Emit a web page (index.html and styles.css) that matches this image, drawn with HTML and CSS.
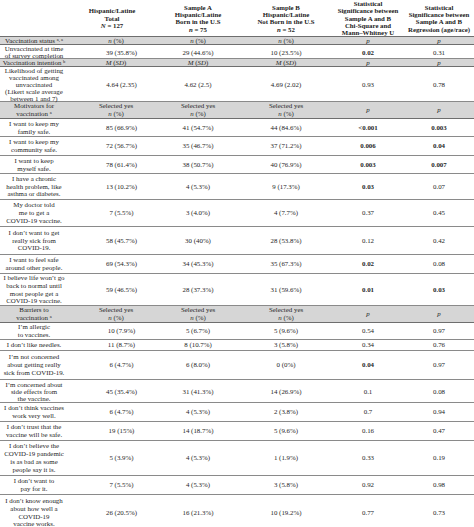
FILE: index.html
```html
<!DOCTYPE html>
<html lang="en">
<head>
<meta charset="utf-8">
<title>Vaccination table</title>
<link rel="stylesheet" href="styles.css">
</head>
<body>
<div class="page">
  <div class="row head h37">
    <div class="c"><div class="t"></div></div>
    <div class="c"><div class="t">Hispanic/Latine<br>Total<br><i>N</i> = 127</div></div>
    <div class="c"><div class="t">Sample A<br>Hispanic/Latine<br>Born in the U.S<br><i>n</i> = 75</div></div>
    <div class="c"><div class="t">Sample B<br>Hispanic/Latine<br>Not Born in the U.S<br><i>n</i> = 52</div></div>
    <div class="c"><div class="t">Statistical<br>Significance between<br>Sample A and B<br>Chi-Square and<br>Mann–Whitney U</div></div>
    <div class="c"><div class="t">Statistical<br>Significance between<br>Sample A and B<br>Regression (age/race)</div></div>
  </div>

  <div class="row sec h8">
    <div class="c"><div class="t">Vaccination status <sup>a, a</sup></div></div>
    <div class="c"><div class="t"><i>n</i> (%)</div></div>
    <div class="c"><div class="t"><i>n</i> (%)</div></div>
    <div class="c"><div class="t"><i>n</i> (%)</div></div>
    <div class="c"><div class="t"><i>p</i></div></div>
    <div class="c"><div class="t"><i>p</i></div></div>
  </div>
  <div class="row dat h14 tight">
    <div class="c"><div class="t">Unvaccinated at time<br>of survey completion</div></div>
    <div class="c"><div class="t">39 (35.8%)</div></div>
    <div class="c"><div class="t">29 (44.6%)</div></div>
    <div class="c"><div class="t">10 (23.5%)</div></div>
    <div class="c"><div class="t"><b>0.02</b></div></div>
    <div class="c"><div class="t">0.31</div></div>
  </div>

  <div class="row sec h8">
    <div class="c"><div class="t">Vaccination intention <sup>b</sup></div></div>
    <div class="c"><div class="t"><i>M</i> (<i>SD</i>)</div></div>
    <div class="c"><div class="t"><i>M</i> (<i>SD</i>)</div></div>
    <div class="c"><div class="t"><i>M</i> (<i>SD</i>)</div></div>
    <div class="c"><div class="t"><i>p</i></div></div>
    <div class="c"><div class="t"><i>p</i></div></div>
  </div>
  <div class="row dat h35 tight">
    <div class="c"><div class="t">Likelihood of getting<br>vaccinated among<br>unvaccinated<br>(Likert scale average<br>between 1 and 7)</div></div>
    <div class="c"><div class="t">4.64 (2.35)</div></div>
    <div class="c"><div class="t">4.62 (2.5)</div></div>
    <div class="c"><div class="t">4.69 (2.02)</div></div>
    <div class="c"><div class="t">0.93</div></div>
    <div class="c"><div class="t">0.78</div></div>
  </div>

  <div class="row sec h17">
    <div class="c"><div class="t">Motivators for<br>vaccination <sup>a</sup></div></div>
    <div class="c"><div class="t">Selected yes<br><i>n</i> (%)</div></div>
    <div class="c"><div class="t">Selected yes<br><i>n</i> (%)</div></div>
    <div class="c"><div class="t">Selected yes<br><i>n</i> (%)</div></div>
    <div class="c"><div class="t"><i>p</i></div></div>
    <div class="c"><div class="t"><i>p</i></div></div>
  </div>
  <div class="row dat h18">
    <div class="c"><div class="t">I want to keep my<br>family safe.</div></div>
    <div class="c"><div class="t">85 (66.9%)</div></div>
    <div class="c"><div class="t">41 (54.7%)</div></div>
    <div class="c"><div class="t">44 (84.6%)</div></div>
    <div class="c"><div class="t"><b>&lt;0.001</b></div></div>
    <div class="c"><div class="t"><b>0.003</b></div></div>
  </div>
  <div class="row dat h19">
    <div class="c"><div class="t">I want to keep my<br>community safe.</div></div>
    <div class="c"><div class="t">72 (56.7%)</div></div>
    <div class="c"><div class="t">35 (46.7%)</div></div>
    <div class="c"><div class="t">37 (71.2%)</div></div>
    <div class="c"><div class="t"><b>0.006</b></div></div>
    <div class="c"><div class="t"><b>0.04</b></div></div>
  </div>
  <div class="row dat h18">
    <div class="c"><div class="t">I want to keep<br>myself safe.</div></div>
    <div class="c"><div class="t">78 (61.4%)</div></div>
    <div class="c"><div class="t">38 (50.7%)</div></div>
    <div class="c"><div class="t">40 (76.9%)</div></div>
    <div class="c"><div class="t"><b>0.003</b></div></div>
    <div class="c"><div class="t"><b>0.007</b></div></div>
  </div>
  <div class="row dat h26">
    <div class="c"><div class="t">I have a chronic<br>health problem, like<br>asthma or diabetes.</div></div>
    <div class="c"><div class="t">13 (10.2%)</div></div>
    <div class="c"><div class="t">4 (5.3%)</div></div>
    <div class="c"><div class="t">9 (17.3%)</div></div>
    <div class="c"><div class="t"><b>0.03</b></div></div>
    <div class="c"><div class="t">0.07</div></div>
  </div>
  <div class="row dat h27">
    <div class="c"><div class="t">My doctor told<br>me to get a<br>COVID-19 vaccine.</div></div>
    <div class="c"><div class="t">7 (5.5%)</div></div>
    <div class="c"><div class="t">3 (4.0%)</div></div>
    <div class="c"><div class="t">4 (7.7%)</div></div>
    <div class="c"><div class="t">0.37</div></div>
    <div class="c"><div class="t">0.45</div></div>
  </div>
  <div class="row dat h28">
    <div class="c"><div class="t">I don’t want to get<br>really sick from<br>COVID-19.</div></div>
    <div class="c"><div class="t">58 (45.7%)</div></div>
    <div class="c"><div class="t">30 (40%)</div></div>
    <div class="c"><div class="t">28 (53.8%)</div></div>
    <div class="c"><div class="t">0.12</div></div>
    <div class="c"><div class="t">0.42</div></div>
  </div>
  <div class="row dat h19">
    <div class="c"><div class="t">I want to feel safe<br>around other people.</div></div>
    <div class="c"><div class="t">69 (54.3%)</div></div>
    <div class="c"><div class="t">34 (45.3%)</div></div>
    <div class="c"><div class="t">35 (67.3%)</div></div>
    <div class="c"><div class="t"><b>0.02</b></div></div>
    <div class="c"><div class="t">0.08</div></div>
  </div>
  <div class="row dat h32">
    <div class="c"><div class="t">I believe life won’t go<br>back to normal until<br>most people get a<br>COVID-19 vaccine.</div></div>
    <div class="c"><div class="t">59 (46.5%)</div></div>
    <div class="c"><div class="t">28 (37.3%)</div></div>
    <div class="c"><div class="t">31 (59.6%)</div></div>
    <div class="c"><div class="t"><b>0.01</b></div></div>
    <div class="c"><div class="t"><b>0.03</b></div></div>
  </div>

  <div class="row sec h17">
    <div class="c"><div class="t">Barriers to<br>vaccination <sup>a</sup></div></div>
    <div class="c"><div class="t">Selected yes<br><i>n</i> (%)</div></div>
    <div class="c"><div class="t">Selected yes<br><i>n</i> (%)</div></div>
    <div class="c"><div class="t">Selected yes<br><i>n</i> (%)</div></div>
    <div class="c"><div class="t"><i>p</i></div></div>
    <div class="c"><div class="t"><i>p</i></div></div>
  </div>
  <div class="row dat h17">
    <div class="c"><div class="t">I’m allergic<br>to vaccines.</div></div>
    <div class="c"><div class="t">10 (7.9%)</div></div>
    <div class="c"><div class="t">5 (6.7%)</div></div>
    <div class="c"><div class="t">5 (9.6%)</div></div>
    <div class="c"><div class="t">0.54</div></div>
    <div class="c"><div class="t">0.97</div></div>
  </div>
  <div class="row dat h11">
    <div class="c"><div class="t">I don’t like needles.</div></div>
    <div class="c"><div class="t">11 (8.7%)</div></div>
    <div class="c"><div class="t">8 (10.7%)</div></div>
    <div class="c"><div class="t">3 (5.8%)</div></div>
    <div class="c"><div class="t">0.34</div></div>
    <div class="c"><div class="t">0.76</div></div>
  </div>
  <div class="row dat h29">
    <div class="c"><div class="t">I’m not concerned<br>about getting really<br>sick from COVID-19.</div></div>
    <div class="c"><div class="t">6 (4.7%)</div></div>
    <div class="c"><div class="t">6 (8.0%)</div></div>
    <div class="c"><div class="t">0 (0%)</div></div>
    <div class="c"><div class="t"><b>0.04</b></div></div>
    <div class="c"><div class="t">0.97</div></div>
  </div>
  <div class="row dat h23 tight">
    <div class="c"><div class="t">I’m concerned about<br>side effects from<br>the vaccine.</div></div>
    <div class="c"><div class="t">45 (35.4%)</div></div>
    <div class="c"><div class="t">31 (41.3%)</div></div>
    <div class="c"><div class="t">14 (26.9%)</div></div>
    <div class="c"><div class="t">0.1</div></div>
    <div class="c"><div class="t">0.08</div></div>
  </div>
  <div class="row dat h19">
    <div class="c"><div class="t">I don’t think vaccines<br>work very well.</div></div>
    <div class="c"><div class="t">6 (4.7%)</div></div>
    <div class="c"><div class="t">4 (5.3%)</div></div>
    <div class="c"><div class="t">2 (3.8%)</div></div>
    <div class="c"><div class="t">0.7</div></div>
    <div class="c"><div class="t">0.94</div></div>
  </div>
  <div class="row dat h19">
    <div class="c"><div class="t">I don’t trust that the<br>vaccine will be safe.</div></div>
    <div class="c"><div class="t">19 (15%)</div></div>
    <div class="c"><div class="t">14 (18.7%)</div></div>
    <div class="c"><div class="t">5 (9.6%)</div></div>
    <div class="c"><div class="t">0.16</div></div>
    <div class="c"><div class="t">0.47</div></div>
  </div>
  <div class="row dat h35">
    <div class="c"><div class="t">I don’t believe the<br>COVID-19 pandemic<br>is as bad as some<br>people say it is.</div></div>
    <div class="c"><div class="t">5 (3.9%)</div></div>
    <div class="c"><div class="t">4 (5.3%)</div></div>
    <div class="c"><div class="t">1 (1.9%)</div></div>
    <div class="c"><div class="t">0.33</div></div>
    <div class="c"><div class="t">0.19</div></div>
  </div>
  <div class="row dat h19">
    <div class="c"><div class="t">I don’t want to<br>pay for it.</div></div>
    <div class="c"><div class="t">7 (5.5%)</div></div>
    <div class="c"><div class="t">4 (5.3%)</div></div>
    <div class="c"><div class="t">3 (5.8%)</div></div>
    <div class="c"><div class="t">0.92</div></div>
    <div class="c"><div class="t">0.98</div></div>
  </div>
  <div class="row dat h36">
    <div class="c"><div class="t">I don’t know enough<br>about how well a<br>COVID-19<br>vaccine works.</div></div>
    <div class="c"><div class="t">26 (20.5%)</div></div>
    <div class="c"><div class="t">16 (21.3%)</div></div>
    <div class="c"><div class="t">10 (19.2%)</div></div>
    <div class="c"><div class="t">0.77</div></div>
    <div class="c"><div class="t">0.73</div></div>
  </div>
</div>
</body>
</html>
```

FILE: styles.css
```css
html, body {
  margin: 0;
  padding: 0;
  background: #ffffff;
}

body {
  width: 474px;
  height: 527px;
  overflow: hidden;
}

.page {
  width: 484px;
  font-family: "Liberation Serif", "Times New Roman", serif;
  font-size: 6.9px;
  line-height: 7.8px;
  color: #262626;
}

.row {
  display: grid;
  grid-template-columns: 68px 98px 64px 112px 52px 90px;
  box-sizing: border-box;
  border-bottom: 1px solid #8a8a8a;
}

.c {
  display: flex;
  align-items: center;
  justify-content: center;
  min-width: 0;
}

.t {
  flex: none;
  text-align: center;
  white-space: nowrap;
}

.head {
  font-weight: bold;
  font-size: 6.8px;
  line-height: 7.3px;
  color: #1c1c1c;
  border-bottom: 1px solid #6e6e6e;
}

.head .c:nth-child(2) { padding-right: 10px; }

.sec {
  background: #d6d6d6;
  border-bottom: 1px solid #6e6e6e;
}

.sec .c:nth-child(2) { padding-right: 2px; }

.dat .c:nth-child(2) { padding-left: 9px; }

.tight { line-height: 7px; }

sup {
  font-size: 4.5px;
  line-height: 0;
  vertical-align: 2.5px;
}

b { font-weight: bold; }

.h8 { height: 8px; }
.h11 { height: 11px; }
.h14 { height: 14px; }
.h17 { height: 17px; }
.h18 { height: 18px; }
.h19 { height: 19px; }
.h23 { height: 23px; }
.h26 { height: 26px; }
.h27 { height: 27px; }
.h28 { height: 28px; }
.h29 { height: 29px; }
.h32 { height: 32px; }
.h35 { height: 35px; }
.h36 { height: 36px; }
.h37 { height: 37px; }
```
